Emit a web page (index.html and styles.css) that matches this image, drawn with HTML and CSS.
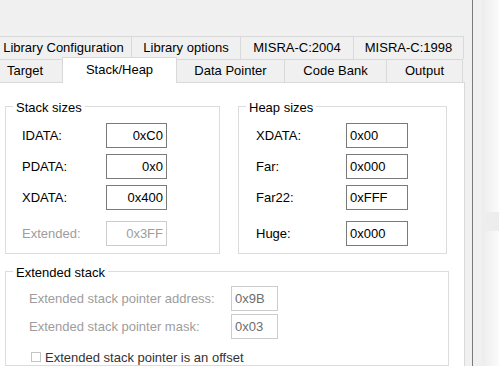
FILE: index.html
```html
<!DOCTYPE html>
<html lang="en">
<head>
  <meta charset="UTF-8" />
  <title>Options - Stack/Heap</title>
  <link rel="stylesheet" href="styles.css">
</head>
<body>

  <div class="dialog">
    <div class="top-space"></div>

    <div class="tabs-row row-back">
      <div class="tab tab-libconf">Library Configuration</div>
      <div class="tab tab-libopt">Library options</div>
      <div class="tab tab-misra04">MISRA-C:2004</div>
      <div class="tab tab-misra98 last">MISRA-C:1998</div>
    </div>
    <div class="tabs-row row-front">
      <div class="tab tab-target">Target</div>
      <div class="tab tab-stack active">Stack/Heap</div>
      <div class="tab tab-dptr">Data Pointer</div>
      <div class="tab tab-code">Code Bank</div>
      <div class="tab tab-output last">Output</div>
    </div>

    <div class="panel">
      <div class="groups">
        <fieldset class="group group-stack">
          <legend>Stack sizes</legend>
          <div class="group-body">
            <div class="row">
              <span class="lbl">IDATA:</span>
              <input class="field right" value="0xC0">
            </div>
            <div class="row">
              <span class="lbl">PDATA:</span>
              <input class="field right" value="0x0">
            </div>
            <div class="row">
              <span class="lbl">XDATA:</span>
              <input class="field right" value="0x400">
            </div>
            <div class="row spaced">
              <span class="lbl off">Extended:</span>
              <input class="field right off" value="0x3FF" readonly>
            </div>
          </div>
        </fieldset>

        <fieldset class="group group-heap">
          <legend>Heap sizes</legend>
          <div class="group-body">
            <div class="row">
              <span class="lbl">XDATA:</span>
              <input class="field" value="0x00">
            </div>
            <div class="row">
              <span class="lbl">Far:</span>
              <input class="field" value="0x000">
            </div>
            <div class="row">
              <span class="lbl">Far22:</span>
              <input class="field" value="0xFFF">
            </div>
            <div class="row spaced">
              <span class="lbl">Huge:</span>
              <input class="field" value="0x000">
            </div>
          </div>
        </fieldset>
      </div>

      <fieldset class="group group-ext">
        <legend>Extended stack</legend>
        <div class="group-body">
          <div class="row">
            <span class="lbl off">Extended stack pointer address:</span>
            <input class="field small off2" value="0x9B" readonly>
          </div>
          <div class="row tight">
            <span class="lbl off">Extended stack pointer mask:</span>
            <input class="field small off2" value="0x03" readonly>
          </div>
          <div class="check-row">
            <span class="checkbox"></span>
            <span class="check-text">Extended stack pointer is an offset</span>
          </div>
        </div>
      </fieldset>
    </div>
  </div>

  <div class="side">
    <div class="side-tab"></div>
  </div>

</body>
</html>
```

FILE: styles.css
```css
* {
  box-sizing: border-box;
}

body {
  font-family: "Liberation Sans", Arial, sans-serif;
  font-size: 13px;
  color: #000;
  background-color: #f0f0f0;
  margin: 0;
  padding: 0;
  width: 499px;
  height: 366px;
  overflow: hidden;
  display: flex;
}

.dialog {
  width: 465px;
  height: 100%;
  display: flex;
  flex-direction: column;
}

.top-space {
  height: 36px;
  flex-shrink: 0;
}

/* tabs */
.tabs-row {
  display: flex;
  height: 23px;
  flex-shrink: 0;
}

.row-back {
  margin-left: -5px;
}

.row-front {
  margin-left: -13px;
}

.tab {
  border-top: 1px solid #d9d9d9;
  border-left: 1px solid #d9d9d9;
  background-color: #f0f0f0;
  text-align: center;
  line-height: 22px;
  white-space: nowrap;
}

.tab.last {
  border-right: 1px solid #d9d9d9;
}

.tab-libconf { width: 136px; }
.tab-libopt { width: 109px; }
.tab-misra04 { width: 113px; }
.tab-misra98 { width: 111px; }

.tab-target { width: 75px; }
.tab-stack { width: 115px; }
.tab-dptr { width: 108px; }
.tab-code { width: 102px; }
.tab-output { width: 77px; }

.tab.active {
  background-color: #fff;
  border-right: 1px solid #d9d9d9;
  margin-top: -2px;
  margin-bottom: -1px;
  margin-right: -1px;
  line-height: 23px;
  position: relative;
  z-index: 1;
}

/* page */
.panel {
  flex-grow: 1;
  background-color: #fff;
  border-top: 1px solid #d9d9d9;
  border-right: 1px solid #d9d9d9;
  padding: 13px 0 0 5px;
}

.groups {
  display: flex;
  gap: 18px;
}

.group {
  margin: 0;
  padding: 0;
  border: 1px solid #dcdcdc;
  min-width: 0;
}

.group legend {
  margin-left: 7px;
  padding: 4px 3px 0;
  line-height: 16px;
}

.group-stack {
  width: 215px;
}

.group-heap {
  width: 209px;
}

.group-body {
  padding: 7px 0 7px 16px;
}

.group-heap .group-body {
  padding-left: 17px;
}

.row {
  display: flex;
  align-items: center;
  height: 25px;
}

.row + .row {
  margin-top: 6px;
}

.row.spaced {
  margin-top: 11px;
}

.row.tight {
  margin-top: 3px;
}

.lbl {
  width: 84px;
  flex-shrink: 0;
}

.group-heap .lbl {
  width: 90px;
}

.lbl.off {
  color: #9d9d9d;
}

.field {
  width: 61px;
  height: 25px;
  border: 1px solid #7a7a7a;
  background-color: #fff;
  font-family: inherit;
  font-size: 13px;
  color: #000;
  padding: 0 3px;
  margin: 0;
  outline: none;
}

.group-heap .field {
  width: 62px;
}

.field.right {
  text-align: right;
}

.field.off {
  border-color: #cccccc;
  color: #9d9d9d;
}

/* extended stack */
.group-ext {
  width: 444px;
  margin-top: 7px;
}

.group-ext .group-body {
  padding: 5px 0 0 23px;
}

.group-ext .lbl {
  width: 202px;
}

.field.small {
  width: 47px;
}

.field.off2 {
  border-color: #cccccc;
  color: #6d6d6d;
}

.check-row {
  display: flex;
  align-items: center;
  height: 16px;
  margin-top: 10px;
  padding-left: 2px;
}

.checkbox {
  width: 10px;
  height: 10px;
  border: 1px solid #c4c4c4;
  background-color: #fff;
  margin-right: 4px;
}

.check-text {
  color: #333;
}

/* window edge on the right */
.side {
  width: 34px;
  height: 100%;
  flex-shrink: 0;
  background: linear-gradient(to right,
    #f0f0f0 0, #f0f0f0 7px,
    #7a7a7a 7px, #7a7a7a 8px,
    #f0f0f0 8px, #f0f0f0 17px,
    #ececec 17px, #fbfbfb 100%);
  padding-top: 212px;
}

.side-tab {
  margin-left: 20px;
  height: 19px;
  background-color: #ededed;
}
```
